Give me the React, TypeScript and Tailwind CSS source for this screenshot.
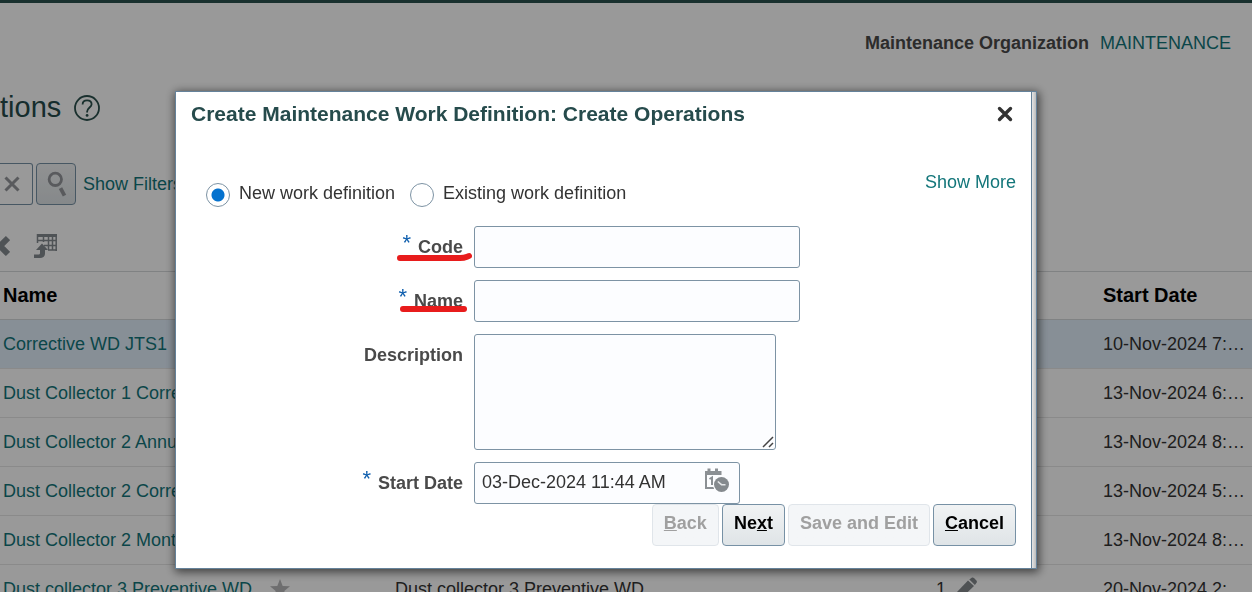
import { useState, type ReactNode } from "react";

type WorkDefinition = {
  name: string;
  description?: string;
  version?: string;
  startDate: string;
};

const workDefinitions: WorkDefinition[] = [
  { name: "Corrective WD JTS1", startDate: "10-Nov-2024 7:…" },
  { name: "Dust Collector 1 Corre", startDate: "13-Nov-2024 6:…" },
  { name: "Dust Collector 2 Annu", startDate: "13-Nov-2024 8:…" },
  { name: "Dust Collector 2 Corre", startDate: "13-Nov-2024 5:…" },
  { name: "Dust Collector 2 Mont", startDate: "13-Nov-2024 8:…" },
  {
    name: "Dust collector 3 Preventive WD",
    description: "Dust collector 3 Preventive WD",
    version: "1",
    startDate: "20-Nov-2024 2:…"
  }
];

const fieldClass = "rounded-[3px] border border-[#7d93a4] bg-[#fcfdff] text-[#333333] outline-none";

function HelpIcon() {
  return (
    <svg width="28" height="28" viewBox="0 0 28 28" fill="none" stroke="#2b504d" strokeWidth="1.800">
      <circle cx="14" cy="14" r="12" />
      <path d="M9.6 10.6c0-2.7 1.9-4.2 4.5-4.2 2.7 0 4.5 1.500 4.500 3.800 0 3.200-4.500 3.600-4.500 7.600v.6" />
      <circle cx="14.1" cy="21.400" r="1.400" fill="#2b504d" stroke="none" />
    </svg>
  );
}

function SearchIcon() {
  return (
    <svg width="22" height="28" viewBox="0 0 22 28" fill="none" stroke="#94979b">
      <circle cx="10.300" cy="9.300" r="6.200" strokeWidth="2.800" />
      <path d="M15.500 18.200l4 7.400" strokeWidth="3.800" />
    </svg>
  );
}

function DetachIcon() {
  return (
    <svg width="24" height="26" viewBox="0 0 24 26" fill="none" stroke="#848a8f">
      <path d="M3.500 1v9M9.500 3v6M14.500 3v14M18.500 3v14M22.200 1v17M3 7.500h19M10 12.500h12M14 17h9" strokeWidth="1.500" />
      <path d="M3 2.500h20" strokeWidth="3" />
      <path d="M8 10.500l6 6.500h-3v3.500c0 3-2 4.500-5 4.500H0v-3.500h4c1.500 0 2-.5 2-1.500v-3H2z" fill="#848a8f" stroke="none" />
    </svg>
  );
}

function CalendarIcon() {
  return (
    <svg width="26" height="26" viewBox="0 0 26 26">
      <path d="M2 6v14h8" fill="none" stroke="#8b9094" strokeWidth="2" />
      <path d="M1 3h2.500V.5h3V3H11V.5h3V3h3.500v4H1z" fill="#8b9094" />
      <path d="M5.500 11l2.500-1.500V17" fill="none" stroke="#8b9094" strokeWidth="2" />
      <circle cx="17.500" cy="16.500" r="8.500" fill="#fcfdff" />
      <circle cx="17.500" cy="16.500" r="7.500" fill="#858a8e" />
      <path d="M13.800 13.500l3.700 3.200h4" fill="none" stroke="#e4e6e8" strokeWidth="1.600" />
    </svg>
  );
}

function PencilIcon() {
  return (
    <svg width="24" height="24" viewBox="0 0 24 24" fill="#84898d">
      <path d="M13 3.500l6 5.500L6 21.500 0 23.500 1 16z" />
      <path d="M14.300 2.600L16.400.9c.9-.7 1.800-.6 2.600.1l2.400 2.400c.7.8.7 1.700 0 2.500l-1.500 2z" />
    </svg>
  );
}

function StarIcon() {
  return (
    <svg width="20" height="20" viewBox="0 0 20 20" fill="#b8b8ba">
      <path d="M10 0l2.700 6.900 7.300.4-5.700 4.600 1.900 7.100L10 15l-6.200 4 1.900-7.100L0 7.300l7.300-.4z" />
    </svg>
  );
}

function FieldLabel({ htmlFor, required, children }: { htmlFor: string; required?: boolean; children: ReactNode }) {
  return (
    <label htmlFor={htmlFor} className="flex h-[42px] items-center justify-end gap-[7px] font-bold text-[#4a4a4a]">
      {required ? <span className="pb-2 text-[22px] leading-6 font-normal text-[#0f5fae]">*</span> : null}
      <span>{children}</span>
    </label>
  );
}

function Radio({ label, checked, onChange }: { label: string; checked: boolean; onChange: () => void }) {
  return (
    <label className="flex items-start gap-[9px] leading-5">
      <input
        type="radio"
        name="definition-type"
        checked={checked}
        onChange={onChange}
        className="size-6 appearance-none rounded-full border border-[#7d93a4] bg-white checked:bg-[radial-gradient(circle,#0572ce_6px,white_7px)]"
      />
      <span>{label}</span>
    </label>
  );
}

function DialogButton({ disabled, children }: { disabled?: boolean; children: ReactNode }) {
  return (
    <button
      type="button"
      disabled={disabled}
      className="h-[42px] rounded-[4px] border border-[#7791a5] bg-linear-to-b from-[#f1f3f4] to-[#dfe4e7] px-[11px] pb-1 font-bold text-black disabled:border-[#e0e5ea] disabled:from-[#f4f6f8] disabled:to-[#f4f6f8] disabled:text-[#a0a0a0]"
    >
      {children}
    </button>
  );
}

function CreateDialog() {
  const [mode, setMode] = useState<"new" | "existing">("new");
  const [startDate, setStartDate] = useState("03-Dec-2024 11:44 AM");

  return (
    <div
      role="dialog"
      aria-labelledby="dialog-title"
      className="flex w-[862px] max-w-full border border-[#65829a] bg-white shadow-[1px_2px_9px_1px_rgba(0,0,0,0.6)]"
    >
      <div className="flex-1 border-r border-[#65829a] px-[15px] pb-[22px]">
        <header className="flex h-11 items-center justify-between">
          <h2 id="dialog-title" className="text-[21px] font-bold text-[#264b4c]">
            Create Maintenance Work Definition: Create Operations
          </h2>
          <button type="button" aria-label="Close" className="pr-[3px]">
            <svg width="16" height="16" viewBox="0 0 16 16" stroke="#333" strokeWidth="3.400" strokeLinecap="round">
              <path d="M2.500 2.500l11 11M13.500 2.500l-11 11" />
            </svg>
          </button>
        </header>

        <div className="mt-9 flex items-start justify-between">
          <div className="flex gap-[15px] pt-[11px] pl-[15px]">
            <Radio label="New work definition" checked={mode === "new"} onChange={() => setMode("new")} />
            <Radio label="Existing work definition" checked={mode === "existing"} onChange={() => setMode("existing")} />
          </div>
          <a href="#more" className="leading-5 text-[#13767a]">
            Show More
          </a>
        </div>

        <form className="mt-[19px] grid grid-cols-[272px_1fr] gap-x-[11px] gap-y-3">
          <div className="relative">
            <FieldLabel htmlFor="code" required>
              Code
            </FieldLabel>
            <svg className="absolute right-[-11px] bottom-[6px] h-3 w-20" viewBox="0 0 80 12" fill="none">
              <path d="M6 8h60c5 0 6-1 9-2" stroke="#e81c1c" strokeWidth="6" strokeLinecap="round" />
            </svg>
          </div>
          <input id="code" type="text" className={`${fieldClass} h-[42px] w-[326px] px-2`} />

          <div className="relative">
            <FieldLabel htmlFor="name" required>
              Name
            </FieldLabel>
            <svg className="absolute right-[-11px] bottom-[7px] h-3 w-20" viewBox="0 0 80 12" fill="none">
              <path d="M9 6h61" stroke="#e81c1c" strokeWidth="6" strokeLinecap="round" />
            </svg>
          </div>
          <input id="name" type="text" className={`${fieldClass} h-[42px] w-[326px] px-2`} />

          <FieldLabel htmlFor="description">Description</FieldLabel>
          <div className="relative w-[302px]">
            <textarea id="description" className={`${fieldClass} block h-[116px] w-full resize-none p-2`} />
            <svg className="absolute right-[2px] bottom-[2px]" width="12" height="12" viewBox="0 0 12 12" stroke="#444" strokeWidth="1.500">
              <path d="M1 11L11 1M7 11l4-4" />
            </svg>
          </div>

          <FieldLabel htmlFor="start-date" required>
            Start Date
          </FieldLabel>
          <div className={`${fieldClass} flex h-[42px] w-[266px] items-center`}>
            <input
              id="start-date"
              type="text"
              value={startDate}
              onChange={(event) => setStartDate(event.target.value)}
              className="min-w-0 flex-1 pb-[2px] pl-[7px] outline-none"
            />
            <button type="button" aria-label="Select Date and Time" className="pr-[9px] pb-1">
              <CalendarIcon />
            </button>
          </div>
        </form>

        <footer className="flex justify-end gap-[3px]">
          <DialogButton disabled>
            <u>B</u>ack
          </DialogButton>
          <DialogButton>
            Ne<u>x</u>t
          </DialogButton>
          <DialogButton disabled>Save and Edit</DialogButton>
          <DialogButton>
            <u>C</u>ancel
          </DialogButton>
        </footer>
      </div>
      <div className="w-1 bg-linear-to-r from-[#e4e4e4] to-[#bcbcbc]" />
    </div>
  );
}

export default function App() {
  return (
    <div className="h-screen overflow-hidden bg-white font-['Liberation_Sans',Arial,sans-serif] text-[18px] text-[#333333]">
      <div className="h-[3px] bg-[#2b504d]" />

      <div className="flex h-20 items-center justify-end gap-[11px] pr-[21px]">
        <span className="font-bold text-[#4a4a4a]">Maintenance Organization</span>
        <a href="#organization" className="text-[#13767a]">
          MAINTENANCE
        </a>
      </div>

      <div className="flex h-[50px] items-center gap-3">
        <h1 className="text-[29px] text-[#264b4c]">tions</h1>
        <button type="button" aria-label="Help">
          <HelpIcon />
        </button>
      </div>

      <div className="mt-[30px] flex items-center">
        <button
          type="button"
          aria-label="Clear"
          className="flex h-[42px] w-[33px] items-center rounded-r-[3px] border border-l-0 border-[#7791a5] pl-1"
        >
          <svg width="16" height="16" viewBox="0 0 16 16" stroke="#94979b" strokeWidth="3">
            <path d="M1.500 1.500l13 13M14.500 1.500l-13 13" />
          </svg>
        </button>
        <button
          type="button"
          aria-label="Search"
          className="ml-[3px] flex h-[42px] w-10 items-center justify-center rounded-[4px] border border-[#7791a5] bg-linear-to-b from-[#f1f3f4] to-[#dfe4e7]"
        >
          <SearchIcon />
        </button>
        <a href="#filters" className="ml-[7px] text-[#13767a]">
          Show Filters
        </a>
      </div>

      <div className="flex h-[66px] items-center gap-6 pt-4">
        <button type="button" aria-label="Delete">
          <svg width="10" height="24" viewBox="0 0 10 24" stroke="#848a8f" strokeWidth="6">
            <path d="M-10 22L8 4M-10 2L8 20" />
          </svg>
        </button>
        <button type="button" aria-label="Detach">
          <DetachIcon />
        </button>
      </div>

      <table className="w-full table-fixed border-collapse text-left">
        <colgroup>
          <col className="w-[392px]" />
          <col />
          <col className="w-[159px]" />
          <col className="w-[157px]" />
        </colgroup>
        <thead>
          <tr className="h-12 border-y border-[#d6d9db] text-[20px] leading-6 text-black">
            <th className="pb-[2px] pl-[3px] font-bold">Name</th>
            <th />
            <th />
            <th className="pb-[2px] pl-2 font-bold">Start Date</th>
          </tr>
        </thead>
        <tbody>
          {workDefinitions.map((row, index) => (
            <tr
              key={row.name}
              className={`h-[49px] border-b border-[#e6e6e6] ${index === 0 ? "bg-[#e2effb]" : ""}`}
            >
              <td className="pl-[3px]">
                <div className="flex items-center gap-[18px]">
                  <a href="#definition" className="whitespace-nowrap text-[#13767a]">
                    {row.name}
                  </a>
                  {row.description ? <StarIcon /> : null}
                </div>
              </td>
              <td className="pl-[3px]">{row.description}</td>
              <td>
                {row.version ? (
                  <div className="flex items-center gap-[9px]">
                    <span>{row.version}</span>
                    <PencilIcon />
                  </div>
                ) : null}
              </td>
              <td className="pl-2 whitespace-nowrap">{row.startDate}</td>
            </tr>
          ))}
        </tbody>
      </table>

      <div className="fixed inset-0 flex items-start justify-center bg-black/40 pt-[91px] pr-10">
        <CreateDialog />
      </div>
    </div>
  );
}
